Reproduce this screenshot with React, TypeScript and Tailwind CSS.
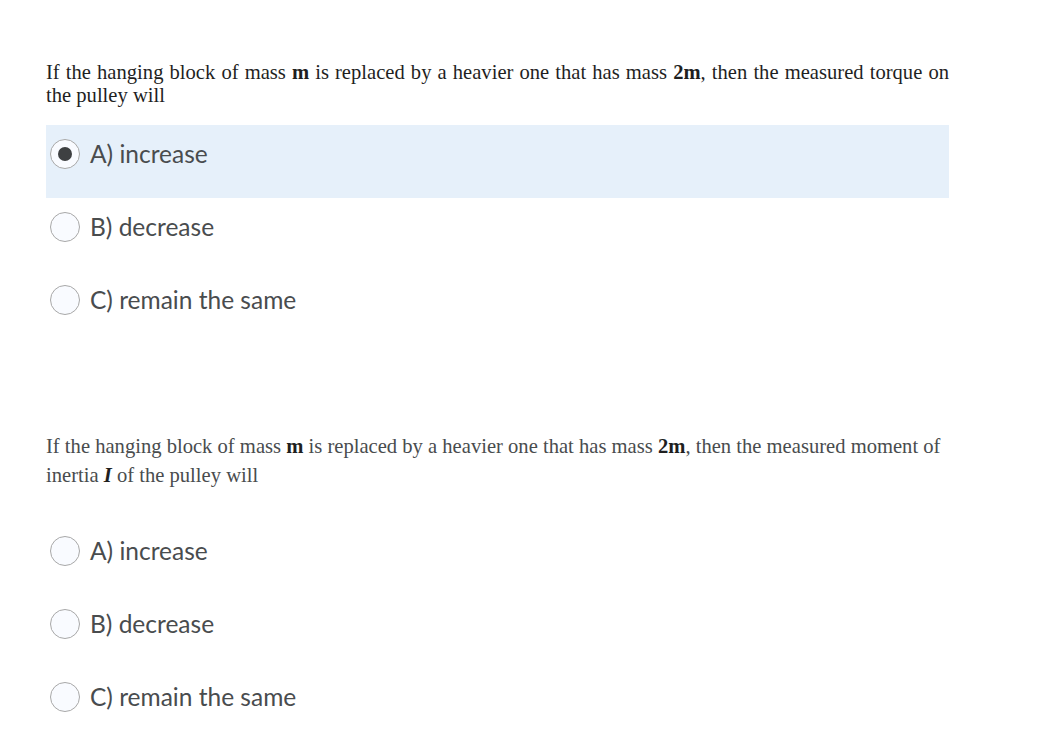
import React from "react";

const serif = { fontFamily: '"Liberation Serif", "Times New Roman", serif' };

function Radio({ checked }: { checked?: boolean }) {
  return (
    <span className="w-[30px] h-[30px] rounded-full border border-[#a8a8a8] bg-[#f9fbff] flex items-center justify-center shrink-0">
      {checked && <span className="w-[14px] h-[14px] rounded-full bg-[#3e4042]" />}
    </span>
  );
}

function Option({ label, checked }: { label: string; checked?: boolean }) {
  return (
    <div className={`h-[73px] flex items-start pt-[14px] pl-[4px] gap-[10px] ${checked ? "bg-[#e6f0fa]" : ""}`}>
      <Radio checked={checked} />
      <span className="text-[24.5px] leading-[30px] text-[#494c4e]" style={{ fontFamily: 'Lato, "Noto Sans", sans-serif' }}>
        {label}
      </span>
    </div>
  );
}

export default function App() {
  return (
    <div className="w-[1038px] h-[749px] bg-white overflow-hidden">
      <div className="ml-[46px] w-[903px] pt-[61px]">
        <p className="text-[20.6px] leading-[23px] text-[#1f1f1f] text-justify" style={serif}>
          If the hanging block of mass <b>m</b> is replaced by a heavier one that has mass <b>2m</b>, then the measured torque on the pulley will
        </p>
        <div className="mt-[18px]">
          <Option label="A) increase" checked />
          <Option label="B) decrease" />
          <Option label="C) remain the same" />
        </div>
        <p className="mt-[88px] text-[20.6px] leading-[29px] text-[#494c4e]" style={serif}>
          If the hanging block of mass <b className="text-[#1f1f1f]">m</b> is replaced by a heavier one that has mass <b className="text-[#1f1f1f]">2m</b>, then the measured moment of inertia <b><i className="text-[#1f1f1f]">I</i></b> of the pulley will
        </p>
        <div className="mt-[32px]">
          <Option label="A) increase" />
          <Option label="B) decrease" />
          <Option label="C) remain the same" />
        </div>
      </div>
    </div>
  );
}
